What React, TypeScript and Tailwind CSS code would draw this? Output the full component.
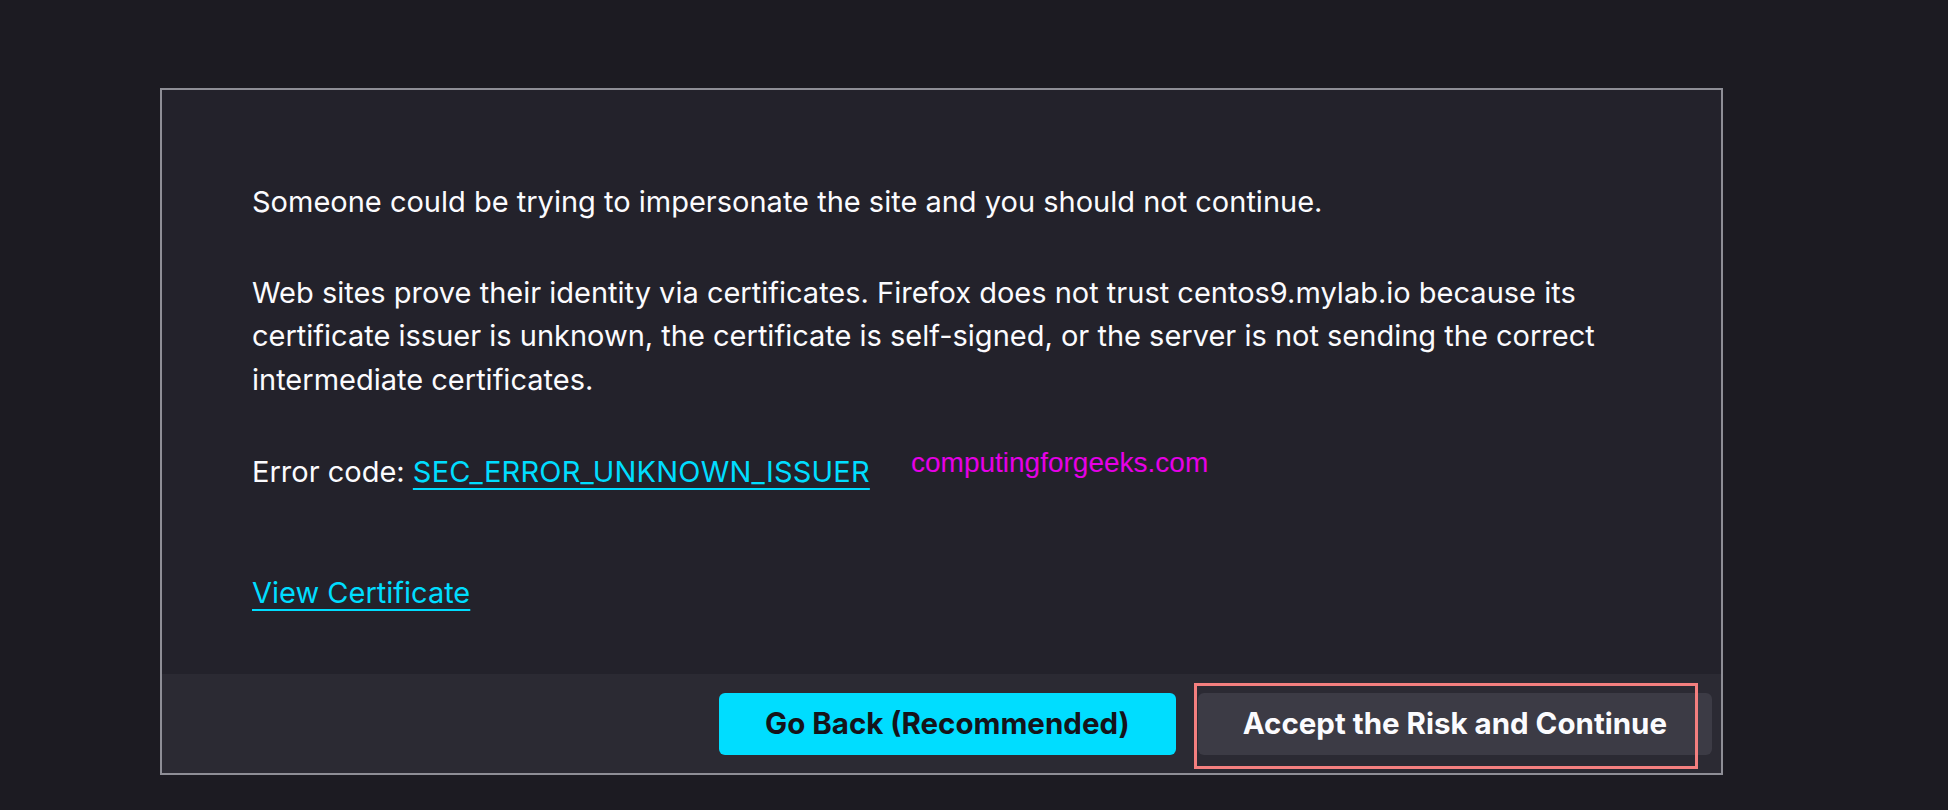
import React from 'react';

const App: React.FC = () => {
  return (
    <div
      className="w-[1948px] h-[810px] bg-[#1c1b22] pt-[88px] pl-[160px] overflow-hidden"
      style={{ fontFamily: 'Inter, "Noto Sans", sans-serif' }}
    >
      <div className="w-[1563px] h-[687px] border-2 border-[#8e8e96] bg-[#23222b] flex flex-col">
        {/* Error text */}
        <div className="flex-1 pt-[90px] px-[90px] text-[29px] leading-[43.5px] text-[#fbfbfe]">
          <p>Someone could be trying to impersonate the site and you should not continue.</p>
          <p className="mt-[47px]">
            Web sites prove their identity via certificates. Firefox does not trust centos9.mylab.io because its
            certificate issuer is unknown, the certificate is self-signed, or the server is not sending the correct
            intermediate certificates.
          </p>
          <div className="relative mt-[49px]">
            <p>
              Error code:{' '}
              <a className="text-[#00ddff] underline decoration-2 underline-offset-[6px] cursor-pointer tracking-[0.2px]">
                SEC_ERROR_UNKNOWN_ISSUER
              </a>
            </p>
            {/* watermark */}
            <span
              className="absolute left-[659px] top-[-9px] text-[28px] text-[#e600e6]"
              style={{ fontFamily: '"Liberation Sans", Arial, sans-serif' }}
            >
              computingforgeeks.com
            </span>
          </div>
          <p className="mt-[77px]">
            <a className="text-[#00ddff] underline decoration-2 underline-offset-[6px] cursor-pointer">
              View Certificate
            </a>
          </p>
        </div>

        {/* Footer actions */}
        <div className="h-[99px] bg-[#2b2a33] flex items-center justify-end gap-[22px] pr-[9px]">
          <button className="h-[62px] px-[46px] rounded-[6px] bg-[#00ddff] text-[#15141a] text-[29.5px] font-bold">
            Go Back (Recommended)
          </button>
          <div className="relative">
            <button className="h-[62px] px-[45px] rounded-[6px] bg-[#3c3b45] text-[#fbfbfe] text-[29.5px] font-bold">
              Accept the Risk and Continue
            </button>
            <div className="absolute left-[-4px] top-[-10px] w-[504px] h-[86px] border-[3px] border-[#f47f7f] pointer-events-none" />
          </div>
        </div>
      </div>
    </div>
  );
};

export default App;
